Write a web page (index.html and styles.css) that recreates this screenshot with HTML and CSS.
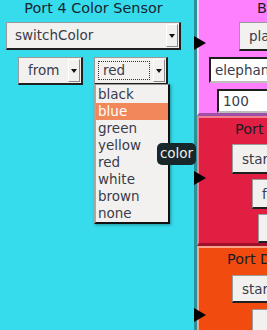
FILE: index.html
```html
<!DOCTYPE html>
<html>
<head>
<meta charset="utf-8">
<link rel="stylesheet" href="styles.css">
</head>
<body>
<div class="stage">
  <section class="sensor">
    <div class="title">Port 4 Color Sensor</div>
    <div class="row row-top">
      <div class="select select-wide"><span class="label">switchColor</span><span class="arrow"><i></i></span></div>
    </div>
    <div class="row row-second">
      <div class="select select-from"><span class="label">from</span><span class="arrow"><i></i></span></div>
      <div class="select select-color focused"><span class="label"><span class="focus">red</span></span><span class="arrow"><i></i></span>
        <ul class="list">
          <li>black</li>
          <li class="hl">blue</li>
          <li>green</li>
          <li>yellow</li>
          <li>red</li>
          <li>white</li>
          <li>brown</li>
          <li>none</li>
        </ul>
      </div>
    </div>
    <div class="tip">color</div>
  </section>
  <div class="rail">
    <section class="panel pink">
      <div class="ptitle t-pink">Buzzer</div>
      <div class="btn b-pla">play note</div>
      <div class="field f-eleph">elephant</div>
      <div class="field f-num">100</div>
    </section>
    <section class="panel red">
      <div class="ptitle t-red">Port C Motor</div>
      <div class="btn b-star">start motor</div>
      <div class="btn b-f">forward</div>
      <div class="btn b-3">&nbsp;</div>
    </section>
    <section class="panel orange">
      <div class="ptitle t-orange">Port D Motor</div>
      <div class="btn b-star2">start motor</div>
      <div class="btn b-f2">&nbsp;</div>
    </section>
  </div>
  <span class="plug p1"></span>
  <span class="plug p2"></span>
  <span class="plug p3"></span>
</div>
</body>
</html>
```
FILE: styles.css
```css
html, body { margin: 0; padding: 0; }
body { width: 267px; height: 330px; overflow: hidden; background: #36dcec; }
.stage { position: relative; display: flex; width: 267px; height: 330px; overflow: hidden; }

.sensor { position: relative; width: 194px; flex: none; background: #36dcec; border-right: 3px solid #2a9199; }
.title { font-family: "DejaVu Sans", sans-serif; font-size: 14.4px; line-height: 17px; color: #1b2430; text-align: center; padding-right: 7px; white-space: nowrap; }

.row { display: flex; }
.row-top { margin-top: 5px; padding-left: 6px; }
.row-second { margin-top: 7px; padding-left: 18px; gap: 11px; }

.select { position: relative; display: flex; box-sizing: border-box; height: 28px; background: #f2f1ef;
  border-style: solid; border-width: 1px 2px 2px 1px; border-color: #9a9a9a #202020 #202020 #9a9a9a;
  font-family: "DejaVu Sans", sans-serif; font-size: 13.5px; color: #3a3c4a; }
.select-wide { width: 175px; }
.select-from { width: 65px; }
.select-color { width: 74px; }
.label { flex: 1; display: flex; align-items: center; padding-left: 8px; line-height: 17px; white-space: nowrap; }
.select-from .label { padding-left: 9px; }
.select-color .label { padding: 3px 3px 3px 3px; }
.focus { flex: 1; align-self: stretch; display: flex; align-items: center; padding-left: 4px; border: 1px dotted #333; }
.arrow { flex: none; width: 12px; margin: 1px 1px 1px 0; box-sizing: border-box; display: flex; align-items: center; justify-content: center;
  background: #f2f1ef; border-style: solid; border-width: 1px; border-color: #ffffff #8a8a8a #8a8a8a #ffffff; }
.arrow i { width: 0; height: 0; border-left: 3px solid transparent; border-right: 3px solid transparent; border-top: 4px solid #111; }

.list { position: absolute; left: -1px; top: 26px; width: 76px; margin: 0; padding: 1px 0 0 0; list-style: none; box-sizing: border-box;
  background: #f2f1ef; border-style: solid; border-width: 1px 2px 2px 2px; border-color: #9a9a9a #111 #111 #a8a8a8;
  box-shadow: 1px 1px 3px rgba(0,0,0,0.35); z-index: 5; }
.list li { height: 17px; line-height: 17px; padding-left: 2px; font-family: "DejaVu Sans", sans-serif; font-size: 13.5px; color: #3a3c4a; }
.list li.hl { background: #f2875a; color: #ffffff; }

.tip { position: absolute; left: 157px; top: 143px; width: 39px; height: 22px; box-sizing: border-box; border-radius: 5px;
  background: #18272a; color: #f0f0ec; font-family: "DejaVu Sans", sans-serif; font-size: 13.5px; line-height: 21px; text-align: center; z-index: 6; }

.rail { flex: 1; display: flex; flex-direction: column; overflow: hidden; min-width: 0; }
.panel { box-sizing: border-box; display: flex; flex-direction: column; align-items: flex-start; border-left: 2px solid; }
.pink { height: 124px; background: #ff80ff; border-left-color: #ffd0ff; border-bottom: 3px solid #a04fa6; }
.red { height: 133px; background: #e11f43; border-left-color: #f0808f; border-top: 2px solid #f0808f; border-bottom: 3px solid #a0102c; }
.orange { flex: 1; background: #f24b10; border-left-color: #f8a58a; border-top: 2px solid #f8a58a; }

.ptitle { font-family: "DejaVu Sans", sans-serif; font-size: 14.4px; line-height: 17px; color: #1b1b24; white-space: nowrap; }
.t-pink { margin-left: 58px; }
.t-red { margin-left: 36px; margin-top: 3px; }
.t-orange { margin-left: 28px; margin-top: 3px; }

.btn { box-sizing: border-box; background: #f2f1ef; border-style: solid; border-width: 1px 2px 2px 1px; border-color: #9a9a9a #202020 #202020 #9a9a9a;
  font-family: "DejaVu Sans", sans-serif; font-size: 13.5px; color: #3a3c4a; white-space: nowrap; padding-left: 9px; padding-right: 9px; display: flex; align-items: center; }
.b-pla { margin-left: 40px; margin-top: 5px; height: 29px; }
.b-star { margin-left: 33px; margin-top: 6px; height: 30px; }
.b-f { margin-left: 53px; margin-top: 5px; height: 30px; }
.b-3 { margin-left: 59px; margin-top: 5px; height: 29px; width: 40px; }
.b-star2 { margin-left: 33px; margin-top: 7px; height: 28px; }
.b-f2 { margin-left: 53px; margin-top: 6px; height: 28px; width: 40px; }

.field { box-sizing: border-box; background: #ffffff; border-style: solid; border-width: 2px; border-color: #1e1e1e #bdbdbd #bdbdbd #1e1e1e;
  font-family: "DejaVu Sans", sans-serif; font-size: 13.5px; color: #3a3c4a; white-space: nowrap; padding-left: 4px; display: flex; align-items: center; width: 120px; }
.f-eleph { margin-left: 10px; margin-top: 6px; height: 26px; }
.f-num { margin-left: 18px; margin-top: 6px; height: 24px; padding-left: 4px; }

.plug { position: absolute; left: 194px; width: 0; height: 0; border-top: 7px solid transparent; border-bottom: 7px solid transparent; border-left: 12px solid #000; z-index: 4; }
.p1 { top: 36px; }
.p2 { top: 171px; }
.p3 { top: 308px; }
```
